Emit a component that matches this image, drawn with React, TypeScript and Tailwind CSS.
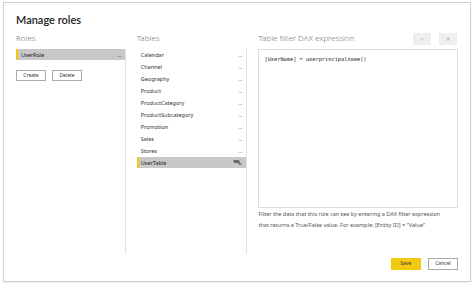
import React from "react";

const tables = [
  "Calendar",
  "Channel",
  "Geography",
  "Product",
  "ProductCategory",
  "ProductSubcategory",
  "Promotion",
  "Sales",
  "Stores",
];

export default function App() {
  return (
    <div
      className="w-[474px] h-[286px] bg-white pt-[2px] pl-[3px] pr-[3px] pb-[4px]"
      style={{ fontFamily: '"Noto Sans", "Open Sans", sans-serif' }}
    >
      <div className="h-full border border-[#cfcfcf] flex flex-col pl-[12px] pr-[12px] shadow-[0_1px_2px_rgba(0,0,0,0.08)]">
        <div
          className="text-[11px] leading-[14px] text-[#222] mt-[10px] font-semibold"
          style={{ fontFamily: 'Lato, "Noto Sans", sans-serif' }}
        >
          Manage roles
        </div>
        <div className="flex mt-[6px] flex-1">
          {/* Roles */}
          <div className="w-[110px] flex flex-col">
            <div className="text-[8px] leading-[10px] text-[#777] font-light h-[10px]">Roles</div>
            <div className="flex-1 border-r border-[#e3e3e3] mt-[6px] mb-[27px] flex flex-col">
              <div className="h-[11px] bg-[#c8c8c8] border-l-2 border-[#f2c811] flex items-center justify-between pl-[3px] pr-[3px]">
                <span className="text-[5.5px] leading-[8px] text-[#222]">UserRole</span>
                <span className="text-[5.5px] leading-[8px] text-[#555]">...</span>
              </div>
              <div className="flex gap-[6px] mt-[10px]">
                <div className="w-[30px] h-[11px] border border-[#aaa] flex items-center justify-center text-[5px] text-[#333]">Create</div>
                <div className="w-[30px] h-[11px] border border-[#aaa] flex items-center justify-center text-[5px] text-[#333]">Delete</div>
              </div>
            </div>
          </div>
          {/* Tables */}
          <div className="w-[111px] ml-[11px] flex flex-col">
            <div className="text-[8px] leading-[10px] text-[#777] font-light h-[10px]">Tables</div>
            <div className="flex-1 border-r border-[#e3e3e3] mt-[6px] mb-[27px] flex flex-col">
              {tables.map((t) => (
                <div key={t} className="h-[12px] flex items-center justify-between pl-[4px] pr-[4px]">
                  <span className="text-[5.5px] leading-[8px] text-[#333]">{t}</span>
                  <span className="text-[5.5px] leading-[8px] text-[#777]">...</span>
                </div>
              ))}
              <div className="h-[11px] bg-[#c8c8c8] border-l-2 border-[#f2c811] flex items-center justify-between pl-[2px] pr-[3px]">
                <span className="text-[5.5px] leading-[8px] text-[#222]">UserTable</span>
                <svg width="10" height="6" viewBox="0 0 10 6">
                  <path d="M0 1 L6 1 L6 4 L9 4" stroke="#555" strokeWidth="1.2" fill="none" />
                  <rect x="1" y="0" width="4" height="3" fill="#666" />
                </svg>
              </div>
            </div>
          </div>
          {/* DAX */}
          <div className="w-[200px] ml-[11px] flex flex-col">
            <div className="flex items-start justify-between h-[10px]">
              <span className="text-[8px] leading-[10px] text-[#777] font-light">Table filter DAX expression</span>
              <div className="flex gap-[8px] mr-[1px] relative z-10">
                <div className="w-[18px] h-[12px] bg-[#efefef] flex items-center justify-center text-[4.5px] leading-[6px] text-[#999]">✓</div>
                <div className="w-[18px] h-[12px] bg-[#efefef] flex items-center justify-center text-[4.5px] leading-[6px] text-[#999]">✕</div>
              </div>
            </div>
            <div className="h-[159px] mt-[6px] border border-[#dcdcdc] pl-[5px] pt-[5px]">
              <div
                className="text-[5.3px] leading-[8px] text-[#222]"
                style={{ fontFamily: '"DejaVu Sans Mono", monospace' }}
              >
                [UserName] = userprincipalname()
              </div>
            </div>
            <div className="text-[5.5px] leading-[11px] text-[#555] mt-[1px] whitespace-nowrap">
              <div>Filter the data that this role can see by entering a DAX filter expression</div>
              <div>that returns a True/False value. For example: [Entity ID] = "Value"</div>
            </div>
            <div className="flex-1" />
            <div className="flex justify-end gap-[7px] mb-[11px]">
              <div className="w-[30px] h-[12px] bg-[#f2c811] flex items-center justify-center text-[5px] text-[#333]">Save</div>
              <div className="w-[30px] h-[12px] border border-[#aaa] flex items-center justify-center text-[5px] text-[#333]">Cancel</div>
            </div>
          </div>
        </div>
      </div>
    </div>
  );
}
